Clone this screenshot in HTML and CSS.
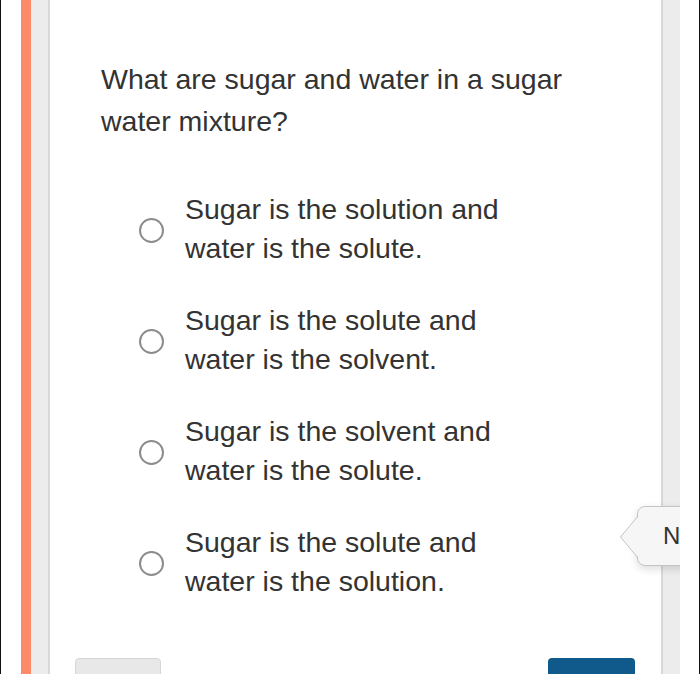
FILE: index.html
```html
<!DOCTYPE html>
<html>
<head>
<meta charset="utf-8">
<link rel="stylesheet" href="styles.css">
</head>
<body>
<div class="frame">
  <div class="gutter-left"><div class="accent"></div><div class="rail"></div></div>
  <main class="content">
    <p class="question">What are sugar and water in a sugar water mixture?</p>
    <ul class="options">
      <li class="option"><span class="radio"></span><span class="label">Sugar is the solution and water is the solute.</span></li>
      <li class="option"><span class="radio"></span><span class="label">Sugar is the solute and water is the solvent.</span></li>
      <li class="option"><span class="radio"></span><span class="label">Sugar is the solvent and water is the solute.</span></li>
      <li class="option"><span class="radio"></span><span class="label">Sugar is the solute and water is the solution.</span></li>
    </ul>
    <div class="actions">
      <span class="btn btn-light"></span>
      <span class="btn btn-primary"></span>
    </div>
  </main>
  <div class="gutter-right"><div class="rail"></div><div class="blank"></div></div>
  <div class="tip">
    <div class="tip-box">
      <svg class="tip-arrow" width="20" height="44" viewBox="0 0 20 44"><polygon points="20,1 1.5,22 20,43" fill="#f6f6f6"/><polyline points="19,1 1.5,22 19,43" fill="none" stroke="#c4c4c4" stroke-width="1"/></svg>
      N
    </div>
  </div>
</div>
</body>
</html>
```
FILE: styles.css
```css
html, body { margin: 0; padding: 0; background: #fff; }
body { font-family: "Liberation Sans", Arial, sans-serif; color: #333; }
.frame {
  position: relative;
  width: 700px; height: 674px; overflow: hidden;
  display: flex;
  box-sizing: border-box;
  border-left: 1px solid #111;
  border-right: 1px solid #111;
}
.gutter-left { display: flex; padding-left: 20px; }
.accent { width: 10px; background: #fd8a68; }
.rail { width: 17px; background: #ececec; }
.gutter-left .rail { border-right: 2px solid #d8d8d8; }
.gutter-right { display: flex; }
.gutter-right .rail { border-left: 2px solid #d8d8d8; }
.blank { width: 19px; background: #fff; }
.content { flex: 1; position: relative; }
.question {
  margin: 58px 0 0 51px;
  width: 520px;
  font-size: 28.5px; line-height: 42px;
}
.options { list-style: none; margin: 31px 0 0 0; padding: 0; }
.option {
  display: flex; align-items: center;
  height: 111px;
  padding-left: 89px;
}
.radio {
  width: 21px; height: 21px;
  border: 2px solid #8c8c8c; border-radius: 50%;
  flex: none;
  margin-top: 3px;
}
.label {
  margin-left: 21px;
  width: 350px;
  font-size: 28.5px; line-height: 39px;
}
.actions { position: absolute; left: 0; right: 0; top: 658px; }
.btn { position: absolute; top: 0; height: 24px; border-radius: 4px; box-sizing: border-box; }
.btn-light { left: 25px; width: 86px; background: #e8e8e8; border: 1px solid #d6d6d6; }
.btn-primary { left: 498px; width: 87px; background: #0f5a8b; }
.tip {
  position: absolute; left: 600px; top: 496px;
  width: 79px; height: 84px; overflow: hidden;
}
.tip-box {
  position: absolute; left: 36px; top: 10px;
  width: 70px; height: 60px;
  box-sizing: border-box;
  background: #f6f6f6;
  border: 1px solid #c4c4c4; border-radius: 8px;
  box-shadow: 0 3px 9px rgba(0,0,0,0.14);
  font-size: 24px; line-height: 58px; padding-left: 25px;
  color: #333;
}
.tip-arrow { position: absolute; left: -19px; top: 8px; }
```
